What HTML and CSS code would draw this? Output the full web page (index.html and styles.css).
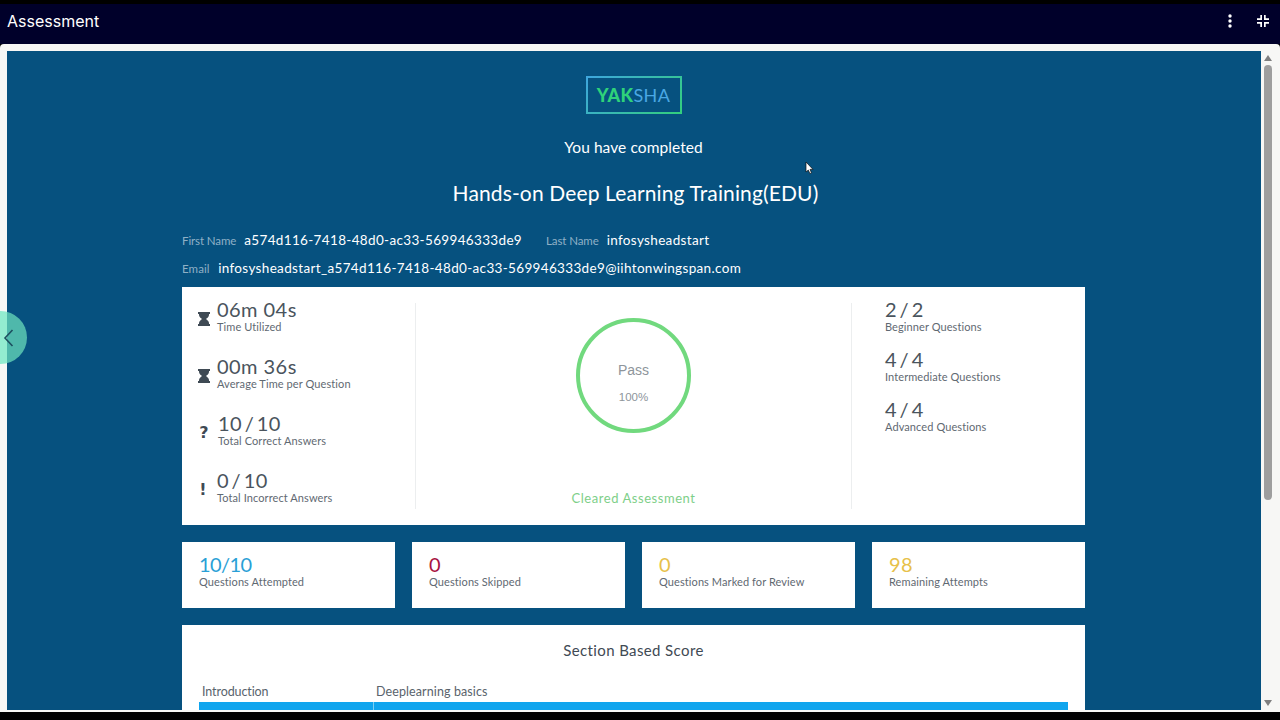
FILE: index.html
```html
<!DOCTYPE html>
<html lang="en">
<head>
<meta charset="utf-8">
<title>Assessment</title>
<link rel="stylesheet" href="styles.css">
</head>
<body>
<div class="app">
  <header class="topbar">
    <span class="topbar-title">Assessment</span>
    <div class="topbar-actions">
      <svg class="dots" width="4" height="14" viewBox="0 0 4 14"><circle cx="2" cy="2" r="1.7"/><circle cx="2" cy="7" r="1.7"/><circle cx="2" cy="12" r="1.7"/></svg>
      <svg class="compress" width="12" height="12" viewBox="0 0 12 12"><path d="M3.3 0H5v5H0V3.3h3.3zM8.7 0H7v5h5V3.3H8.7zM3.3 12H5V7H0v1.7h3.3zM8.7 12H7V7h5v1.7H8.7z"/></svg>
    </div>
  </header>
  <div class="frame">
    <main class="panel">
      <div class="logo"><span class="logo-yak">YAK</span><span class="logo-sha">SHA</span></div>
      <p class="completed">You have completed</p>
      <h1 class="course">Hands-on Deep Learning Training(EDU)</h1>
      <div class="identity">
        <div class="id-row">
          <span class="id-label">First Name</span><span class="id-value">a574d116-7418-48d0-ac33-569946333de9</span>
          <span class="id-label id-gap">Last Name</span><span class="id-value">infosysheadstart</span>
        </div>
        <div class="id-row">
          <span class="id-label id-email">Email</span><span class="id-value">infosysheadstart_a574d116-7418-48d0-ac33-569946333de9@iihtonwingspan.com</span>
        </div>
      </div>
      <section class="summary">
        <div class="col col-left">
          <div class="metric">
            <svg class="m-icon" width="12" height="14" viewBox="0 0 12 14"><path d="M0 0h12v2h-1v1c0 2-2 3-3 4 1 1 3 2 3 4v1h1v2H0v-2h1v-1c0-2 2-3 3-4-1-1-3-2-3-4V2H0z"/></svg>
            <div><div class="m-value">06m 04s</div><div class="m-label">Time Utilized</div></div>
          </div>
          <div class="metric">
            <svg class="m-icon" width="12" height="14" viewBox="0 0 12 14"><path d="M0 0h12v2h-1v1c0 2-2 3-3 4 1 1 3 2 3 4v1h1v2H0v-2h1v-1c0-2 2-3 3-4-1-1-3-2-3-4V2H0z"/></svg>
            <div><div class="m-value">00m 36s</div><div class="m-label">Average Time per Question</div></div>
          </div>
          <div class="metric">
            <span class="m-glyph">?</span>
            <div class="m-shift"><div class="m-value m-frac">10 / 10</div><div class="m-label">Total Correct Answers</div></div>
          </div>
          <div class="metric metric-narrow">
            <span class="m-glyph">!</span>
            <div><div class="m-value m-frac">0 / 10</div><div class="m-label">Total Incorrect Answers</div></div>
          </div>
        </div>
        <div class="col col-mid">
          <div class="ring">
            <span class="ring-pass">Pass</span>
            <span class="ring-pct">100%</span>
          </div>
          <div class="cleared">Cleared Assessment</div>
        </div>
        <div class="col col-right">
          <div class="level"><div class="m-value m-frac">2 / 2</div><div class="m-label">Beginner Questions</div></div>
          <div class="level"><div class="m-value m-frac">4 / 4</div><div class="m-label">Intermediate Questions</div></div>
          <div class="level"><div class="m-value m-frac">4 / 4</div><div class="m-label">Advanced Questions</div></div>
        </div>
      </section>
      <section class="cards">
        <div class="card"><div class="c-value c-blue">10/10</div><div class="m-label">Questions Attempted</div></div>
        <div class="card"><div class="c-value c-red">0</div><div class="m-label">Questions Skipped</div></div>
        <div class="card"><div class="c-value c-yellow">0</div><div class="m-label">Questions Marked for Review</div></div>
        <div class="card"><div class="c-value c-yellow">98</div><div class="m-label">Remaining Attempts</div></div>
      </section>
      <section class="sections">
        <h2 class="sections-title">Section Based Score</h2>
        <div class="bars">
          <div class="bar-col bar-intro"><div class="bar-name">Introduction</div><div class="bar-fill"></div></div>
          <div class="bar-col bar-deep"><div class="bar-name">Deeplearning basics</div><div class="bar-fill"></div></div>
        </div>
      </section>
    </main>
    <div class="scrollbar">
      <span class="arrow-up"></span>
      <span class="thumb"></span>
      <span class="arrow-down"></span>
    </div>
  </div>
</div>
<div class="side-tab">
  <svg width="11" height="18" viewBox="0 0 11 18"><path d="M9.5 1 2 9l7.5 8" fill="none" stroke="#1d4f5f" stroke-width="1.6"/></svg>
</div>
<svg class="cursor" width="9" height="14" viewBox="0 0 9 14"><path d="M1 1v10l2.3-2 1.6 3.6 1.6-.7-1.5-3.5H8z" fill="#fff" stroke="#111" stroke-width=".7"/></svg>
</body>
</html>
```
FILE: styles.css
```css
* { box-sizing: border-box; }
html, body { margin: 0; height: 720px; overflow: hidden; background: #000; }
body { font-family: "Lato", "Noto Sans", sans-serif; color: #3f4a54; }
.app { height: 712px; padding-top: 4px; display: flex; flex-direction: column; }
.topbar { height: 40px; flex: none; background: #00002a; color: #fff; display: flex; align-items: center; justify-content: space-between; padding: 0 11px 6px 7px; }
.topbar-title { font-family: "Inter", sans-serif; font-size: 16px; }
.topbar-actions { display: flex; align-items: center; gap: 25px; }
.dots, .compress { fill: #fff; display: block; }
.frame { flex: 1; min-height: 0; background: #f7f7f5; border-radius: 4px 4px 0 0; padding: 7px 6px 2px 7px; display: flex; }
.panel { flex: 1; min-width: 0; background: #06517f; overflow: hidden; display: flex; flex-direction: column; align-items: center; padding: 25px 1px 0 0; }
.logo { width: 96px; height: 38px; border: 2px solid; border-image: linear-gradient(135deg, #3ea6de, #33cf7d) 1; display: flex; align-items: center; justify-content: center; font-size: 18px; letter-spacing: .4px; }
.logo-yak { color: #2fd27a; font-weight: 900; }
.logo-sha { color: #4aa8e4; font-weight: 400; }
.completed { margin: 23px 0 0; font-size: 15.5px; line-height: 20px; color: #fff; letter-spacing: .08px; }
.course { margin: 22px 0 0; padding-left: 4px; font-size: 21px; line-height: 28px; font-weight: 400; color: #fff; letter-spacing: .13px; }
.identity { width: 903px; margin-top: 19px; }
.id-row { height: 28px; display: flex; align-items: center; white-space: nowrap; }
.id-label { font-size: 11.5px; color: #8fb0c6; margin-right: 8px; letter-spacing: -.1px; }
.id-gap { margin-left: 24px; }
.id-email { letter-spacing: .1px; margin-right: 8.5px; }
.id-value { font-size: 13.5px; color: #fff; letter-spacing: .34px; }
.summary { width: 903px; height: 238px; margin-top: 5px; flex: none; background: #fff; display: flex; padding: 16px 0; }
.col-left { width: 234px; padding-left: 16px; display: flex; flex-direction: column; gap: 22px; border-right: 1px solid #eceeef; }
.col-mid { width: 436px; display: flex; flex-direction: column; align-items: center; border-right: 1px solid #eceeef; }
.col-right { flex: 1; padding-left: 33px; display: flex; flex-direction: column; gap: 15px; }
.metric { height: 35px; display: flex; align-items: center; gap: 7px; }
.metric:first-child, .level:first-child { margin-top: -5px; }
.metric-narrow { gap: 11px; }
.m-shift { margin-left: 1px; }
.m-icon { fill: #3f4a54; flex: none; margin-top: 7px; }
.m-glyph { width: 12px; font-family: "DejaVu Sans", sans-serif; font-size: 16px; line-height: 16px; font-weight: 700; text-align: center; color: #3f4a54; margin-top: 7px; flex: none; }
.metric-narrow .m-glyph { width: 8px; margin-left: 1px; margin-right: -1px; }
.m-value { font-size: 20px; line-height: 22px; color: #4a545d; letter-spacing: .45px; }
.m-frac { word-spacing: -3px; }
.m-label { font-size: 11px; line-height: 13px; color: #5f6972; letter-spacing: .09px; white-space: nowrap; }
.ring { width: 115px; height: 115px; border-radius: 50%; border: 4px solid #71d97e; margin-top: 15px; display: flex; flex-direction: column; align-items: center; color: #8e959b; font-family: "Liberation Sans", sans-serif; }
.ring-pass { font-size: 14px; line-height: 16px; margin-top: 40px; }
.ring-pct { font-size: 11.5px; line-height: 14px; margin-top: 12px; }
.cleared { margin-top: auto; margin-bottom: 3px; font-size: 13px; line-height: 16px; color: #7ecf89; letter-spacing: .55px; }
.cards { width: 903px; margin-top: 17px; flex: none; display: flex; gap: 17px; }
.card { width: 213px; height: 66px; background: #fff; padding: 13px 17px 0; }
.c-value { font-size: 20px; line-height: 19px; letter-spacing: .4px; }
.c-blue { color: #2a9fd6; letter-spacing: -.6px; }
.c-red { color: #a8123f; }
.c-yellow { color: #e7c14a; }
.cards .m-label { line-height: 16px; }
.sections { width: 903px; margin-top: 17px; flex: 1; background: #fff; padding: 0 17px; overflow: hidden; }
.sections-title { margin: 15px 0 0; text-align: center; font-size: 15px; line-height: 20px; font-weight: 400; color: #3f4a54; letter-spacing: .38px; }
.bars { display: flex; margin-top: 24px; }
.bar-col { min-width: 0; }
.bar-intro { width: 174px; }
.bar-deep { flex: 1; }
.bar-deep .bar-fill { border-left: 1px solid #7fd0f2; }
.bar-name { font-size: 12.5px; line-height: 16px; color: #59636c; padding-left: 3px; white-space: nowrap; }
.bar-deep .bar-name { letter-spacing: .1px; padding-left: 3px; }
.bar-intro .bar-name { letter-spacing: -.1px; }
.bar-fill { height: 8px; margin-top: 2px; background: #10a5ee; }
.scrollbar { width: 13px; flex: none; display: flex; flex-direction: column; align-items: center; padding: 4px 0; }
.arrow-up { border: 4px solid transparent; border-top: 0; border-bottom: 6px solid #7f7f7f; }
.arrow-down { border: 4px solid transparent; border-bottom: 0; border-top: 6px solid #7f7f7f; margin-top: auto; }
.thumb { width: 8px; height: 435px; margin-top: 4px; border-radius: 4px; background: #9e9e9e; }
.side-tab { position: absolute; left: 0; top: 311px; width: 27px; height: 53px; border-radius: 0 27px 27px 0; background: linear-gradient(90deg, #93ecd0 0, #93ecd0 7px, #4fb8ab 7px); display: flex; align-items: center; padding-left: 3px; }
.cursor { position: absolute; left: 805px; top: 161px; }
```
